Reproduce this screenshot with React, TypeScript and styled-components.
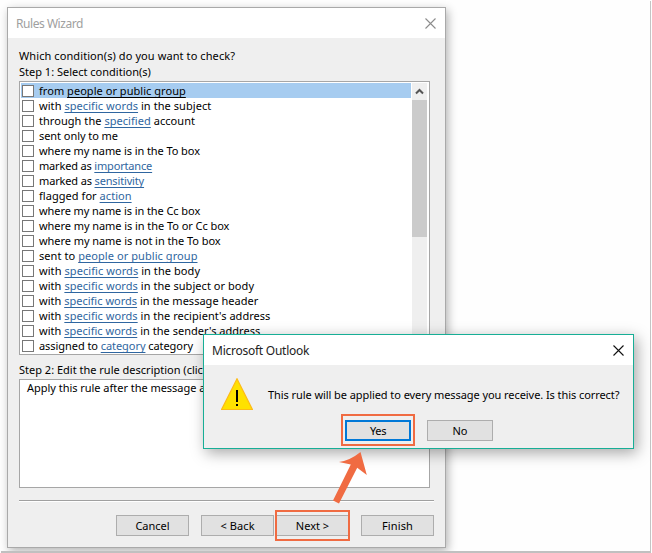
import React from "react";
import styled, { createGlobalStyle } from "styled-components";

const Global = createGlobalStyle`
  * { box-sizing: border-box; }
  body {
    margin: 0;
    background: #fff;
    overflow: hidden;
    color: #000;
    font: 11px/15px "Noto Sans", "Open Sans", sans-serif;
  }
`;

const Page = styled.main`
  position: relative;
  width: 652px;
  height: 553px;
  padding: 7px;
  overflow: hidden;
  background: #fefefe;
`;

const PageEdge = styled.div`
  position: absolute;
  inset: 1px 1px 0 1px;
  border-right: 1px solid #c4c4c4;
  border-bottom: 2px solid #c0c0c0;
  pointer-events: none;
`;

const Wizard = styled.section`
  display: flex;
  flex-direction: column;
  width: 439px;
  height: 541px;
  border: 1px solid #a9a9a9;
  background: #efefef;
  box-shadow: 2px 3px 9px rgba(0, 0, 0, 0.3);
`;

const TitleBar = styled.header<{ $active?: boolean }>`
  display: flex;
  flex: none;
  align-items: center;
  justify-content: space-between;
  height: 30px;
  padding: 0 ${(p) => (p.$active ? "9px" : "9px")} 0 8px;
  background: #fff;
  color: ${(p) => (p.$active ? "#222" : "#a0a0a0")};
  font-size: 12px;
`;

const TitleText = styled.span<{ $spacing: number }>`
  letter-spacing: ${(p) => p.$spacing}px;
`;

const WizardBody = styled.div`
  display: flex;
  flex: 1;
  flex-direction: column;
  padding: 10px 11px 11px;
`;

const Line = styled.p<{ $spacing?: number }>`
  height: 16px;
  margin: 0;
  line-height: 16px;
  letter-spacing: ${(p) => p.$spacing ?? 0}px;
  white-space: nowrap;
`;

const StepTwo = styled(Line)`
  height: 24px;
  padding-top: 7px;
`;

const ListBox = styled.div`
  display: flex;
  flex: none;
  gap: 1px;
  width: 411px;
  height: 274px;
  margin-top: 1px;
  padding: 1px;
  border: 1px solid #a6a6a6;
  background: #fff;
`;

const Rows = styled.ul`
  width: 390px;
  margin: 0;
  padding: 0;
  list-style: none;
`;

const Row = styled.li<{ $selected?: boolean }>`
  display: flex;
  align-items: center;
  gap: 5px;
  height: 15px;
  padding-left: 1px;
  background: ${(p) => (p.$selected ? "#a6ccf0" : "transparent")};
  white-space: pre;
`;

const Check = styled.span`
  flex: none;
  width: 12px;
  height: 12px;
  border: 1px solid #777;
  background: #fff;
`;

const RowText = styled.span<{ $spacing: number }>`
  letter-spacing: ${(p) => p.$spacing}px;
`;

const Value = styled.span<{ $selected?: boolean }>`
  color: ${(p) => (p.$selected ? "#000" : "#2f66a0")};
  text-decoration: underline;
  text-decoration-skip-ink: none;
  text-decoration-thickness: 1px;
  text-underline-offset: 2px;
`;

const Scrollbar = styled.div`
  width: 15px;
  background: #efefef;
`;

const ScrollUp = styled.div`
  display: flex;
  height: 17px;
  padding: 5px 0 0 3px;
`;

const Thumb = styled.div`
  height: 137px;
  background: #cbcbcb;
`;

const Description = styled.div`
  width: 411px;
  height: 109px;
  padding: 0 7px;
  overflow: hidden;
  border: 1px solid #a6a6a6;
  background: #fff;
`;

const Divider = styled.div`
  flex: none;
  width: 415px;
  height: 2px;
  margin-top: 12px;
  border-top: 1px solid #a0a0a0;
  background: #fff;
`;

const WizardActions = styled.footer`
  display: flex;
  margin: 13px 0 0 97px;
`;

const Button = styled.button<{ $width: number; $gap?: number; $focus?: boolean; $spacing?: number }>`
  width: ${(p) => p.$width}px;
  height: 21px;
  margin: 0 0 0 ${(p) => p.$gap ?? 0}px;
  padding: 0;
  border: ${(p) => (p.$focus ? "2px solid #0078d7" : "1px solid #adadad")};
  background: #e1e1e1;
  color: #000;
  font: inherit;
  line-height: 17px;
  letter-spacing: ${(p) => p.$spacing ?? 0}px;
`;

const Marker = styled.span<{ $inset: string }>`
  position: absolute;
  inset: ${(p) => p.$inset};
  border: 2px solid #f06b42;
  pointer-events: none;
`;

const Marked = styled.span`
  position: relative;
  display: flex;
`;

const Dialog = styled.section`
  position: absolute;
  left: 203px;
  top: 334px;
  display: flex;
  flex-direction: column;
  width: 431px;
  height: 115px;
  border: 1px solid #17ae96;
  background: #efefef;
  box-shadow: 3px 4px 14px rgba(0, 0, 0, 0.35);
`;

const Message = styled.div`
  display: flex;
  gap: 15px;
  padding: 13px 0 0 17px;
  height: 55px;
`;

const MessageText = styled.p`
  margin: 9px 0 0;
  letter-spacing: -0.07px;
  white-space: nowrap;
`;

const DialogActions = styled.footer`
  display: flex;
  margin-left: 141px;
`;

const Arrow = styled.svg`
  position: absolute;
  left: 330px;
  top: 450px;
`;

type Condition = { before: string; value?: string; after?: string; spacing: number };

const conditions: Condition[] = [
  { before: "from ", value: "people or public group", spacing: 0.04 },
  { before: "with ", value: "specific words", after: " in the subject", spacing: 0.06 },
  { before: "through the ", value: "specified", after: " account", spacing: 0.05 },
  { before: "sent only to me", spacing: -0.06 },
  { before: "where my name is in the To box", spacing: -0.08 },
  { before: "marked as ", value: "importance", spacing: -0.17 },
  { before: "marked as ", value: "sensitivity", spacing: -0.15 },
  { before: "flagged for ", value: "action", spacing: 0.05 },
  { before: "where my name is in the Cc box", spacing: -0.08 },
  { before: "where my name is in the To or Cc box", spacing: -0.06 },
  { before: "where my name is not in the To box", spacing: -0.06 },
  { before: "sent to ", value: "people or public group", spacing: 0.07 },
  { before: "with ", value: "specific words", after: " in the body", spacing: 0.07 },
  { before: "with ", value: "specific words", after: " in the subject or body", spacing: 0.05 },
  { before: "with ", value: "specific words", after: " in the message header", spacing: 0.01 },
  { before: "with ", value: "specific words", after: " in the recipient's address", spacing: 0.04 },
  { before: "with ", value: "specific words", after: " in the sender's address", spacing: 0.02 },
  { before: "assigned to ", value: "category", after: " category", spacing: -0.06 },
];

const CloseIcon = ({ color }: { color: string }) => (
  <svg width="11" height="11" viewBox="0 0 11 11">
    <path d="M.5.5l10 10M10.5.5l-10 10" stroke={color} strokeWidth="1.1" fill="none" />
  </svg>
);

const WarningIcon = () => (
  <svg width="32" height="32" viewBox="0 0 32 32">
    <path d="M16 .8L31.4 31.5H.6z" fill="#ffe100" stroke="#fdbb16" strokeWidth="1.2" />
    <path d="M15 12h2v12h-2zM15 26h2v2h-2z" fill="#000" />
  </svg>
);

export default function App() {
  return (
    <Page>
      <Global />
      <PageEdge />
      <Wizard>
        <TitleBar>
          <TitleText $spacing={-0.45}>Rules Wizard</TitleText>
          <CloseIcon color="#8c8c8c" />
        </TitleBar>
        <WizardBody>
          <Line $spacing={0.09}>Which condition(s) do you want to check?</Line>
          <Line>Step 1: Select condition(s)</Line>
          <ListBox>
            <Rows>
              {conditions.map(({ before, value, after, spacing }, i) => (
                <Row key={i} $selected={i === 0}>
                  <Check />
                  <RowText $spacing={spacing}>
                    {before}
                    {value && <Value $selected={i === 0}>{value}</Value>}
                    {after}
                  </RowText>
                </Row>
              ))}
            </Rows>
            <Scrollbar>
              <ScrollUp>
                <svg width="9" height="7" viewBox="0 0 9 7">
                  <path d="M1 5.5L4.5 2L8 5.5" fill="none" stroke="#555" strokeWidth="2" />
                </svg>
              </ScrollUp>
              <Thumb />
            </Scrollbar>
          </ListBox>
          <StepTwo>Step 2: Edit the rule description (click an underlined value)</StepTwo>
          <Description>
            <Line $spacing={-0.03}>Apply this rule after the message arrives</Line>
          </Description>
          <Divider />
          <WizardActions>
            <Button $width={73}>Cancel</Button>
            <Button $width={73} $gap={12} $spacing={0.1}>&lt; Back</Button>
            <Marked>
              <Button $width={73} $gap={2}>Next &gt;</Button>
              <Marker $inset="-5px -1px -5px 1px" />
            </Marked>
            <Button $width={73} $gap={12} $spacing={0.1}>Finish</Button>
          </WizardActions>
        </WizardBody>
      </Wizard>
      <Dialog>
        <TitleBar $active>
          <TitleText $spacing={-0.25}>Microsoft Outlook</TitleText>
          <CloseIcon color="#111" />
        </TitleBar>
        <Message>
          <WarningIcon />
          <MessageText>This rule will be applied to every message you receive. Is this correct?</MessageText>
        </Message>
        <DialogActions>
          <Marked>
            <Button $width={66} $focus $spacing={-0.3}>Yes</Button>
            <Marker $inset="-6px -4px -5px -4px" />
          </Marked>
          <Button $width={66} $gap={16}>No</Button>
        </DialogActions>
      </Dialog>
      <Arrow width="40" height="56" viewBox="0 0 40 56">
        <path d="M30.5 2L36.8 25 27.2 17.8 9 53.6 3 50.6 20.8 14.6 9 12Q20 10.5 30.5 2z" fill="#f06b42" />
      </Arrow>
    </Page>
  );
}
